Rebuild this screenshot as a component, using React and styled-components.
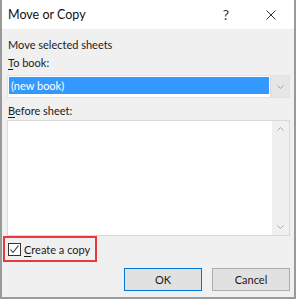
import React, { useState } from 'react';
import styled, { createGlobalStyle } from 'styled-components';

const Global = createGlobalStyle`
  html, body { margin: 0; padding: 0; background: #fff; }
  body { font-family: Lato, "Noto Sans", sans-serif; }
`;

const Window = styled.div`
  box-sizing: border-box;
  width: 296px;
  height: 299px;
  border: 2px solid #9a9a9a;
  border-top: none;
  background: #f0f0f0;
  display: flex;
  flex-direction: column;
`;

const TitleBar = styled.div`
  height: 29px;
  background: #fff;
  display: flex;
  align-items: center;
  padding-left: 6px;
  font-size: 12.5px;
  color: #111;
`;

const Title = styled.div`
  flex: 1;
  margin-top: -1px;
`;

const TitleButton = styled.div`
  width: ${p => p.w}px;
  display: flex;
  justify-content: center;
  align-items: center;
  font-size: 14px;
  color: #333;
`;

const Body = styled.div`
  display: flex;
  flex-direction: column;
  padding: 0 4px 0 5px;
  font-size: 11px;
  color: #1a1a1a;
`;

const Label = styled.div`
  margin-left: 1px;
  margin-top: ${p => p.mt}px;
  height: 16px;
  line-height: 16px;
  white-space: nowrap;
`;

const Key = styled.span`
  text-decoration: underline;
  text-underline-offset: 2px;
`;

const Select = styled.div`
  margin-top: ${p => p.mt}px;
  box-sizing: border-box;
  height: 23px;
  border: 1px solid #e3e3e3;
  background: #fff;
  display: flex;
`;

const Selected = styled.div`
  flex: 1;
  margin: 1px 1px 3px 1px;
  background: #3399ff;
  color: #fff;
  line-height: 17px;
  padding-left: 2px;
`;

const DropButton = styled.div`
  width: 18px;
  background: #e6e6e6;
  border-left: 1px solid #dadada;
  display: flex;
  align-items: center;
  justify-content: center;
`;

const ListBox = styled.div`
  margin-top: ${p => p.mt}px;
  box-sizing: border-box;
  height: 116px;
  border: 1px solid #d9d9d9;
  background: #fff;
  display: flex;
`;

const ListArea = styled.div`
  flex: 1;
`;

const ScrollBar = styled.div`
  width: 17px;
  background: #f0f0f0;
  display: flex;
  flex-direction: column;
  justify-content: space-between;
  align-items: center;
  padding: 6px 0 6px;
`;

const CheckRow = styled.label`
  margin: 0 0 0 -4px;
  box-sizing: border-box;
  width: 94px;
  height: 26px;
  border: 2px solid #e8383d;
  display: flex;
  align-items: center;
  padding-left: 3px;
  gap: 3px;
  white-space: nowrap;
  cursor: default;
`;

const Box = styled.div`
  box-sizing: border-box;
  flex: none;
  width: 13px;
  height: 13px;
  border: 1px solid #333;
  background: #fff;
  display: flex;
  align-items: center;
  justify-content: center;
`;

const ButtonRow = styled.div`
  margin-top: 6px;
  display: flex;
  justify-content: flex-end;
  gap: 10px;
`;

const Button = styled.button`
  box-sizing: border-box;
  width: 78px;
  height: 23px;
  background: #e1e1e1;
  border: 1px solid ${p => (p.primary ? '#0078d7' : '#adadad')};
  font-family: inherit;
  font-size: 11px;
  color: #1a1a1a;
  padding: 0;
`;

const Chevron = ({ up }) => (
  <svg width="7" height="4" viewBox="0 0 7 4">
    <path d={up ? 'M0.5 3.5 L3.5 0.5 L6.5 3.5' : 'M0.5 0.5 L3.5 3.5 L6.5 0.5'} fill="none" stroke="#a6a6a6" strokeWidth="1" />
  </svg>
);

export default function App() {
  const [checked, setChecked] = useState(true);

  return (
    <>
      <Global />
      <Window>
        <TitleBar>
          <Title>Move or Copy</Title>
          <TitleButton w={44}>?</TitleButton>
          <TitleButton w={46}>
            <svg width="10" height="10" viewBox="0 0 10 10">
              <path d="M0.5 0.5 L9.5 9.5 M9.5 0.5 L0.5 9.5" stroke="#333" strokeWidth="1" />
            </svg>
          </TitleButton>
        </TitleBar>
        <Body>
          <Label mt={8}>Move selected sheets</Label>
          <Label mt={2}><Key>T</Key>o book:</Label>
          <Select mt={4}>
            <Selected>(new book)</Selected>
            <DropButton><Chevron /></DropButton>
          </Select>
          <Label mt={5}><Key>B</Key>efore sheet:</Label>
          <ListBox mt={1}>
            <ListArea />
            <ScrollBar>
              <Chevron up />
              <Chevron />
            </ScrollBar>
          </ListBox>
          <CheckRow onClick={() => setChecked(c => !c)}>
            <Box>
              {checked && (
                <svg width="11" height="11" viewBox="0 0 11 11">
                  <path d="M1.5 5.5 L4 8.5 L9.5 1.5" fill="none" stroke="#333" strokeWidth="1.1" />
                </svg>
              )}
            </Box>
            <span><Key>C</Key>reate a copy</span>
          </CheckRow>
          <ButtonRow>
            <Button primary>OK</Button>
            <Button>Cancel</Button>
          </ButtonRow>
        </Body>
      </Window>
    </>
  );
}
